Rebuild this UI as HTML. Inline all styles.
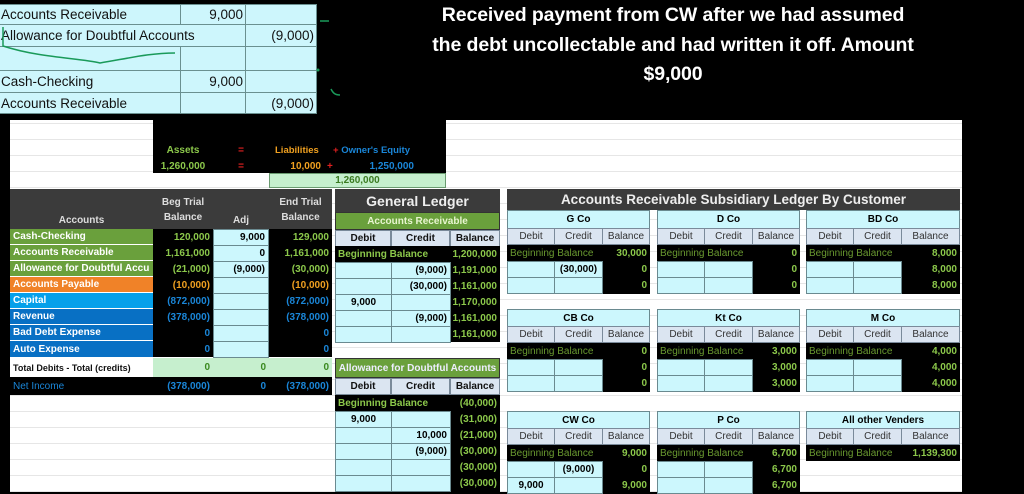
<!DOCTYPE html>
<html><head><meta charset="utf-8"><style>
*{margin:0;padding:0}
body{width:1024px;height:492px;background:#000;position:relative;overflow:hidden;font-family:"Liberation Sans",Arial,sans-serif}
.c{position:absolute;box-sizing:border-box;display:flex;align-items:center;font-size:10px;white-space:nowrap;overflow:hidden;padding:0 3px}
.r{justify-content:flex-end}.m{justify-content:center}
.b{font-weight:bold}
.k{background:#000}
.cy{background:#ccf7fd;border:1px solid #6a8a90}
.hd{background:#dbe5f1;border:1px solid #7a8a9a;color:#333;justify-content:center}
.g{color:#8cc84b}.o{color:#f0a020}.bl{color:#1a86d8}
.t{position:absolute;box-sizing:border-box;background:#cdf6fc;border:1px solid #6a9090;font-size:13.5px;color:#111;display:flex;align-items:center;padding:0 2px;white-space:nowrap}
</style></head><body>
<!-- top journal -->
<div class="t" style="left:-2px;top:4px;width:183px;height:21px">Accounts Receivable</div>
<div class="t" style="left:180px;top:4px;width:66px;height:21px;justify-content:flex-end">9,000</div>
<div class="t" style="left:245px;top:4px;width:72px;height:21px"></div>
<div class="t" style="left:-2px;top:24px;width:248px;height:23px">Allowance for Doubtful Accounts</div>
<div class="t" style="left:245px;top:24px;width:72px;height:23px;justify-content:flex-end">(9,000)</div>
<div class="t" style="left:-2px;top:46px;width:183px;height:25px"></div>
<div class="t" style="left:180px;top:46px;width:66px;height:25px"></div>
<div class="t" style="left:245px;top:46px;width:72px;height:25px"></div>
<div class="t" style="left:-2px;top:70px;width:183px;height:23px">Cash-Checking</div>
<div class="t" style="left:180px;top:70px;width:66px;height:23px;justify-content:flex-end">9,000</div>
<div class="t" style="left:245px;top:70px;width:72px;height:23px"></div>
<div class="t" style="left:-2px;top:92px;width:183px;height:22px">Accounts Receivable</div>
<div class="t" style="left:180px;top:92px;width:66px;height:22px"></div>
<div class="t" style="left:245px;top:92px;width:72px;height:22px;justify-content:flex-end">(9,000)</div>
<svg style="position:absolute;left:0;top:0" width="340" height="120"><path d="M3 27 L3 46 C40 58 80 58 100 63 C130 58 150 53 175 53" stroke="#1a9a5a" stroke-width="1.5" fill="none"/><path d="M320 21 L329 21" stroke="#1a9a5a" stroke-width="1.5"/><circle cx="318" cy="70" r="1.5" fill="#1a9a5a"/><path d="M331 89 C333 93 335 95 340 95" stroke="#1a9a5a" stroke-width="1.5" fill="none"/></svg>
<div style="position:absolute;left:393px;top:1px;width:560px;text-align:center;color:#fff;font-weight:bold;font-size:19.5px;letter-spacing:-0.1px;line-height:29.5px">Received payment from CW after we had assumed<br>the debt uncollectable and had written it off. Amount<br>$9,000</div>
<!-- sheet -->
<div style="position:absolute;left:10px;top:120px;width:952px;height:372px;background:#fff;background-image:repeating-linear-gradient(0deg,#e6e6e6 0 1px,transparent 1px 16px)"></div>
<div class="c k" style="left:153px;top:120px;width:293px;height:53px"></div>
<div class="c b g m" style="left:153px;top:143px;width:60px;height:14px">Assets</div>
<div class="c b m" style="left:213px;top:143px;width:56px;height:14px;color:#e02020">=</div>
<div class="c b o" style="left:272px;top:143px;width:60px;height:14px;font-size:9.5px">Liabilities</div>
<div class="c b bl" style="left:330px;top:143px;width:116px;height:14px;font-size:9.5px"><span style="color:#e02020">+</span>&nbsp;Owner's Equity</div>
<div class="c b g m" style="left:153px;top:159px;width:60px;height:14px">1,260,000</div>
<div class="c b m" style="left:213px;top:159px;width:56px;height:14px;color:#e02020">=</div>
<div class="c b o r" style="left:269px;top:159px;width:55px;height:14px">10,000</div>
<div class="c b" style="left:324px;top:159px;width:20px;height:14px;color:#e02020">+</div>
<div class="c b bl r" style="left:340px;top:159px;width:77px;height:14px">1,250,000</div>
<div class="c b m" style="left:269px;top:173px;width:177px;height:15px;background:#c6efce;border:1px solid #6a9a70;color:#3a7a20">1,260,000</div>
<!-- trial balance -->
<div class="c" style="left:10px;top:189px;width:322px;height:40px;background:#3b3b3b"></div>
<div class="c b m" style="left:10px;top:212px;width:143px;height:16px;color:#ddd">Accounts</div>
<div class="c b m" style="left:153px;top:194px;width:60px;height:32px;color:#ddd;text-align:center;line-height:15px;white-space:normal">Beg Trial Balance</div>
<div class="c b m" style="left:213px;top:212px;width:56px;height:16px;color:#ddd">Adj</div>
<div class="c b m" style="left:269px;top:194px;width:63px;height:32px;color:#ddd;text-align:center;line-height:15px;white-space:normal">End Trial Balance</div>

<div class="c b" style="left:10px;top:229px;width:143px;height:16px;background:#6aa03c;color:#fff;border-bottom:1px solid #fff">Cash-Checking</div>
<div class="c b" style="left:10px;top:245px;width:143px;height:16px;background:#6aa03c;color:#fff;border-bottom:1px solid #fff">Accounts Receivable</div>
<div class="c b" style="left:10px;top:261px;width:143px;height:16px;background:#6aa03c;color:#fff;border-bottom:1px solid #fff">Allowance for Doubtful Accu</div>
<div class="c b" style="left:10px;top:277px;width:143px;height:16px;background:#f08228;color:#fff;border-bottom:1px solid #fff">Accounts Payable</div>
<div class="c b" style="left:10px;top:293px;width:143px;height:16px;background:#05a0ea;color:#fff;border-bottom:1px solid #fff">Capital</div>
<div class="c b" style="left:10px;top:309px;width:143px;height:16px;background:#0870c4;color:#fff;border-bottom:1px solid #fff">Revenue</div>
<div class="c b" style="left:10px;top:325px;width:143px;height:16px;background:#0870c4;color:#fff;border-bottom:1px solid #fff">Bad Debt Expense</div>
<div class="c b" style="left:10px;top:341px;width:143px;height:16px;background:#0870c4;color:#fff">Auto Expense</div>
<div class="c k" style="left:153px;top:229px;width:60px;height:128px"></div>
<div class="c k" style="left:269px;top:229px;width:63px;height:128px"></div>
<div class="c b g r" style="left:153px;top:229px;width:60px;height:16px">120,000</div>
<div class="c b g r" style="left:153px;top:245px;width:60px;height:16px">1,161,000</div>
<div class="c b g r" style="left:153px;top:261px;width:60px;height:16px">(21,000)</div>
<div class="c b o r" style="left:153px;top:277px;width:60px;height:16px">(10,000)</div>
<div class="c b bl r" style="left:153px;top:293px;width:60px;height:16px">(872,000)</div>
<div class="c b bl r" style="left:153px;top:309px;width:60px;height:16px">(378,000)</div>
<div class="c b bl r" style="left:153px;top:325px;width:60px;height:16px">0</div>
<div class="c b bl r" style="left:153px;top:341px;width:60px;height:16px">0</div>
<div class="c b cy r" style="left:213px;top:229px;width:56px;height:17px">9,000</div>
<div class="c b cy r" style="left:213px;top:245px;width:56px;height:17px">0</div>
<div class="c b cy r" style="left:213px;top:261px;width:56px;height:17px">(9,000)</div>
<div class="c b cy" style="left:213px;top:277px;width:56px;height:17px"></div>
<div class="c b cy" style="left:213px;top:293px;width:56px;height:17px"></div>
<div class="c b cy" style="left:213px;top:309px;width:56px;height:17px"></div>
<div class="c b cy" style="left:213px;top:325px;width:56px;height:17px"></div>
<div class="c b cy" style="left:213px;top:341px;width:56px;height:17px"></div>
<div class="c b g r" style="left:269px;top:229px;width:63px;height:16px">129,000</div>
<div class="c b g r" style="left:269px;top:245px;width:63px;height:16px">1,161,000</div>
<div class="c b g r" style="left:269px;top:261px;width:63px;height:16px">(30,000)</div>
<div class="c b o r" style="left:269px;top:277px;width:63px;height:16px">(10,000)</div>
<div class="c b bl r" style="left:269px;top:293px;width:63px;height:16px">(872,000)</div>
<div class="c b bl r" style="left:269px;top:309px;width:63px;height:16px">(378,000)</div>
<div class="c b bl r" style="left:269px;top:325px;width:63px;height:16px">0</div>
<div class="c b bl r" style="left:269px;top:341px;width:63px;height:16px">0</div>
<div class="c b" style="left:10px;top:358px;width:143px;height:19px;background:#fff;font-size:9px;color:#111">Total Debits - Total (credits)</div>
<div class="c" style="left:153px;top:358px;width:179px;height:19px;background:#c6efce"></div>
<div class="c b r" style="left:153px;top:358px;width:60px;height:19px;color:#3a8a20">0</div>
<div class="c b r" style="left:213px;top:358px;width:56px;height:19px;color:#3a8a20">0</div>
<div class="c b r" style="left:269px;top:358px;width:63px;height:19px;color:#3a8a20">0</div>
<div class="c k" style="left:10px;top:377px;width:322px;height:18px"></div>
<div class="c bl" style="left:10px;top:377px;width:143px;height:18px">Net Income</div>
<div class="c b bl r" style="left:153px;top:377px;width:60px;height:18px">(378,000)</div>
<div class="c b bl r" style="left:213px;top:377px;width:56px;height:18px">0</div>
<div class="c b bl r" style="left:269px;top:377px;width:63px;height:18px">(378,000)</div>
<!-- general ledger -->
<div class="c b m" style="left:335px;top:189px;width:165px;height:23px;background:#3b3b3b;color:#eee;font-size:14px">General Ledger</div>
<div class="c b m" style="left:335px;top:212px;width:165px;height:18px;background:#6aa03c;color:#e8f5d0;border:1px solid #333">Accounts Receivable</div>
<div class="c b hd" style="left:335px;top:230px;width:56px;height:17px;color:#111">Debit</div>
<div class="c b hd" style="left:391px;top:230px;width:59px;height:17px;color:#111">Credit</div>
<div class="c b hd" style="left:450px;top:230px;width:50px;height:17px;color:#111">Balance</div>
<div class="c k" style="left:335px;top:246px;width:165px;height:96px"></div>
<div class="c b g" style="left:335px;top:246px;width:120px;height:16px">Beginning Balance</div>
<div class="c b g r" style="left:450px;top:246px;width:50px;height:16px">1,200,000</div>
<div class="c b cy" style="left:335px;top:262px;width:57px;height:17px"></div><div class="c b cy r" style="left:391px;top:262px;width:60px;height:17px">(9,000)</div><div class="c b g r" style="left:450px;top:262px;width:50px;height:16px">1,191,000</div>
<div class="c b cy" style="left:335px;top:278px;width:57px;height:17px"></div><div class="c b cy r" style="left:391px;top:278px;width:60px;height:17px">(30,000)</div><div class="c b g r" style="left:450px;top:278px;width:50px;height:16px">1,161,000</div>
<div class="c b cy m" style="left:335px;top:294px;width:57px;height:17px">9,000</div><div class="c b cy" style="left:391px;top:294px;width:60px;height:17px"></div><div class="c b g r" style="left:450px;top:294px;width:50px;height:16px">1,170,000</div>
<div class="c b cy" style="left:335px;top:310px;width:57px;height:17px"></div><div class="c b cy r" style="left:391px;top:310px;width:60px;height:17px">(9,000)</div><div class="c b g r" style="left:450px;top:310px;width:50px;height:16px">1,161,000</div>
<div class="c b cy" style="left:335px;top:326px;width:57px;height:17px"></div><div class="c b cy" style="left:391px;top:326px;width:60px;height:17px"></div><div class="c b g r" style="left:450px;top:326px;width:50px;height:16px">1,161,000</div>

<div class="c b m" style="left:335px;top:358px;width:165px;height:20px;background:#6aa03c;color:#eef;border:1px solid #333">Allowance for Doubtful Accounts</div>
<div class="c b hd" style="left:335px;top:378px;width:56px;height:17px;color:#111">Debit</div>
<div class="c b hd" style="left:391px;top:378px;width:59px;height:17px;color:#111">Credit</div>
<div class="c b hd" style="left:450px;top:378px;width:50px;height:17px;color:#111">Balance</div>
<div class="c k" style="left:335px;top:395px;width:165px;height:97px"></div>
<div class="c b g" style="left:335px;top:395px;width:120px;height:16px">Beginning Balance</div>
<div class="c b g r" style="left:450px;top:395px;width:50px;height:16px">(40,000)</div>
<div class="c b cy m" style="left:335px;top:411px;width:57px;height:17px">9,000</div><div class="c b cy" style="left:391px;top:411px;width:60px;height:17px"></div><div class="c b g r" style="left:450px;top:411px;width:50px;height:16px">(31,000)</div>
<div class="c b cy" style="left:335px;top:427px;width:57px;height:17px"></div><div class="c b cy r" style="left:391px;top:427px;width:60px;height:17px">10,000</div><div class="c b g r" style="left:450px;top:427px;width:50px;height:16px">(21,000)</div>
<div class="c b cy" style="left:335px;top:443px;width:57px;height:17px"></div><div class="c b cy r" style="left:391px;top:443px;width:60px;height:17px">(9,000)</div><div class="c b g r" style="left:450px;top:443px;width:50px;height:16px">(30,000)</div>
<div class="c b cy" style="left:335px;top:459px;width:57px;height:17px"></div><div class="c b cy" style="left:391px;top:459px;width:60px;height:17px"></div><div class="c b g r" style="left:450px;top:459px;width:50px;height:16px">(30,000)</div>
<div class="c b cy" style="left:335px;top:475px;width:57px;height:17px"></div><div class="c b cy" style="left:391px;top:475px;width:60px;height:17px"></div><div class="c b g r" style="left:450px;top:475px;width:50px;height:16px">(30,000)</div>
<!-- subsidiary -->
<div class="c b m" style="left:507px;top:189px;width:453px;height:21px;background:#3b3b3b;color:#eee;font-size:13.5px">Accounts Receivable Subsidiary Ledger By Customer</div>

<!-- G Co -->
<div class="c b m cy" style="left:507px;top:210px;width:143px;height:19px">G Co</div>
<div class="c hd" style="left:507px;top:228px;width:48px;height:17px">Debit</div><div class="c hd" style="left:554px;top:228px;width:49px;height:17px">Credit</div><div class="c hd" style="left:602px;top:228px;width:48px;height:17px">Balance</div>
<div class="c k" style="left:507px;top:245px;width:143px;height:49px"></div>
<div class="c g" style="left:507px;top:245px;width:100px;height:16px;color:#6a9a30">Beginning Balance</div><div class="c b g r" style="left:602px;top:245px;width:48px;height:16px">30,000</div>
<div class="c cy" style="left:507px;top:261px;width:48px;height:17px"></div><div class="c b cy m" style="left:554px;top:261px;width:49px;height:17px">(30,000)</div><div class="c b g r" style="left:602px;top:261px;width:48px;height:16px">0</div>
<div class="c cy" style="left:507px;top:277px;width:48px;height:17px"></div><div class="c cy" style="left:554px;top:277px;width:49px;height:17px"></div><div class="c b g r" style="left:602px;top:277px;width:48px;height:16px">0</div>
<!-- D Co -->
<div class="c b m cy" style="left:657px;top:210px;width:143px;height:19px">D Co</div>
<div class="c hd" style="left:657px;top:228px;width:48px;height:17px">Debit</div><div class="c hd" style="left:704px;top:228px;width:49px;height:17px">Credit</div><div class="c hd" style="left:752px;top:228px;width:48px;height:17px">Balance</div>
<div class="c k" style="left:657px;top:245px;width:143px;height:49px"></div>
<div class="c g" style="left:657px;top:245px;width:100px;height:16px;color:#6a9a30">Beginning Balance</div><div class="c b g r" style="left:752px;top:245px;width:48px;height:16px">0</div>
<div class="c cy" style="left:657px;top:261px;width:48px;height:17px"></div><div class="c cy" style="left:704px;top:261px;width:49px;height:17px"></div><div class="c b g r" style="left:752px;top:261px;width:48px;height:16px">0</div>
<div class="c cy" style="left:657px;top:277px;width:48px;height:17px"></div><div class="c cy" style="left:704px;top:277px;width:49px;height:17px"></div><div class="c b g r" style="left:752px;top:277px;width:48px;height:16px">0</div>
<!-- BD Co -->
<div class="c b m cy" style="left:806px;top:210px;width:154px;height:19px">BD Co</div>
<div class="c hd" style="left:806px;top:228px;width:48px;height:17px">Debit</div><div class="c hd" style="left:853px;top:228px;width:49px;height:17px">Credit</div><div class="c hd" style="left:901px;top:228px;width:59px;height:17px">Balance</div>
<div class="c k" style="left:806px;top:245px;width:154px;height:49px"></div>
<div class="c g" style="left:806px;top:245px;width:100px;height:16px;color:#6a9a30">Beginning Balance</div><div class="c b g r" style="left:901px;top:245px;width:59px;height:16px">8,000</div>
<div class="c cy" style="left:806px;top:261px;width:48px;height:17px"></div><div class="c cy" style="left:853px;top:261px;width:49px;height:17px"></div><div class="c b g r" style="left:901px;top:261px;width:59px;height:16px">8,000</div>
<div class="c cy" style="left:806px;top:277px;width:48px;height:17px"></div><div class="c cy" style="left:853px;top:277px;width:49px;height:17px"></div><div class="c b g r" style="left:901px;top:277px;width:59px;height:16px">8,000</div>

<!-- CB Co -->
<div class="c b m cy" style="left:507px;top:309px;width:143px;height:18px">CB Co</div>
<div class="c hd" style="left:507px;top:326px;width:48px;height:17px">Debit</div><div class="c hd" style="left:554px;top:326px;width:49px;height:17px">Credit</div><div class="c hd" style="left:602px;top:326px;width:48px;height:17px">Balance</div>
<div class="c k" style="left:507px;top:343px;width:143px;height:49px"></div>
<div class="c g" style="left:507px;top:343px;width:100px;height:16px;color:#6a9a30">Beginning Balance</div><div class="c b g r" style="left:602px;top:343px;width:48px;height:16px">0</div>
<div class="c cy" style="left:507px;top:359px;width:48px;height:17px"></div><div class="c cy" style="left:554px;top:359px;width:49px;height:17px"></div><div class="c b g r" style="left:602px;top:359px;width:48px;height:16px">0</div>
<div class="c cy" style="left:507px;top:375px;width:48px;height:17px"></div><div class="c cy" style="left:554px;top:375px;width:49px;height:17px"></div><div class="c b g r" style="left:602px;top:375px;width:48px;height:16px">0</div>
<!-- Kt Co -->
<div class="c b m cy" style="left:657px;top:309px;width:143px;height:18px">Kt Co</div>
<div class="c hd" style="left:657px;top:326px;width:48px;height:17px">Debit</div><div class="c hd" style="left:704px;top:326px;width:49px;height:17px">Credit</div><div class="c hd" style="left:752px;top:326px;width:48px;height:17px">Balance</div>
<div class="c k" style="left:657px;top:343px;width:143px;height:49px"></div>
<div class="c g" style="left:657px;top:343px;width:100px;height:16px;color:#6a9a30">Beginning Balance</div><div class="c b g r" style="left:752px;top:343px;width:48px;height:16px">3,000</div>
<div class="c cy" style="left:657px;top:359px;width:48px;height:17px"></div><div class="c cy" style="left:704px;top:359px;width:49px;height:17px"></div><div class="c b g r" style="left:752px;top:359px;width:48px;height:16px">3,000</div>
<div class="c cy" style="left:657px;top:375px;width:48px;height:17px"></div><div class="c cy" style="left:704px;top:375px;width:49px;height:17px"></div><div class="c b g r" style="left:752px;top:375px;width:48px;height:16px">3,000</div>
<!-- M Co -->
<div class="c b m cy" style="left:806px;top:309px;width:154px;height:18px">M Co</div>
<div class="c hd" style="left:806px;top:326px;width:48px;height:17px">Debit</div><div class="c hd" style="left:853px;top:326px;width:49px;height:17px">Credit</div><div class="c hd" style="left:901px;top:326px;width:59px;height:17px">Balance</div>
<div class="c k" style="left:806px;top:343px;width:154px;height:49px"></div>
<div class="c g" style="left:806px;top:343px;width:100px;height:16px;color:#6a9a30">Beginning Balance</div><div class="c b g r" style="left:901px;top:343px;width:59px;height:16px">4,000</div>
<div class="c cy" style="left:806px;top:359px;width:48px;height:17px"></div><div class="c cy" style="left:853px;top:359px;width:49px;height:17px"></div><div class="c b g r" style="left:901px;top:359px;width:59px;height:16px">4,000</div>
<div class="c cy" style="left:806px;top:375px;width:48px;height:17px"></div><div class="c cy" style="left:853px;top:375px;width:49px;height:17px"></div><div class="c b g r" style="left:901px;top:375px;width:59px;height:16px">4,000</div>

<!-- CW Co -->
<div class="c b m cy" style="left:507px;top:411px;width:143px;height:18px">CW Co</div>
<div class="c hd" style="left:507px;top:428px;width:48px;height:17px">Debit</div><div class="c hd" style="left:554px;top:428px;width:49px;height:17px">Credit</div><div class="c hd" style="left:602px;top:428px;width:48px;height:17px">Balance</div>
<div class="c k" style="left:507px;top:445px;width:143px;height:47px"></div>
<div class="c g" style="left:507px;top:445px;width:100px;height:16px;color:#6a9a30">Beginning Balance</div><div class="c b g r" style="left:602px;top:445px;width:48px;height:16px">9,000</div>
<div class="c cy" style="left:507px;top:461px;width:48px;height:17px"></div><div class="c b cy m" style="left:554px;top:461px;width:49px;height:17px">(9,000)</div><div class="c b g r" style="left:602px;top:461px;width:48px;height:16px">0</div>
<div class="c b cy m" style="left:507px;top:477px;width:48px;height:17px">9,000</div><div class="c cy" style="left:554px;top:477px;width:49px;height:17px"></div><div class="c b g r" style="left:602px;top:477px;width:48px;height:16px">9,000</div>
<!-- P Co -->
<div class="c b m cy" style="left:657px;top:411px;width:143px;height:18px">P Co</div>
<div class="c hd" style="left:657px;top:428px;width:48px;height:17px">Debit</div><div class="c hd" style="left:704px;top:428px;width:49px;height:17px">Credit</div><div class="c hd" style="left:752px;top:428px;width:48px;height:17px">Balance</div>
<div class="c k" style="left:657px;top:445px;width:143px;height:47px"></div>
<div class="c g" style="left:657px;top:445px;width:100px;height:16px;color:#6a9a30">Beginning Balance</div><div class="c b g r" style="left:752px;top:445px;width:48px;height:16px">6,700</div>
<div class="c cy" style="left:657px;top:461px;width:48px;height:17px"></div><div class="c cy" style="left:704px;top:461px;width:49px;height:17px"></div><div class="c b g r" style="left:752px;top:461px;width:48px;height:16px">6,700</div>
<div class="c cy" style="left:657px;top:477px;width:48px;height:17px"></div><div class="c cy" style="left:704px;top:477px;width:49px;height:17px"></div><div class="c b g r" style="left:752px;top:477px;width:48px;height:16px">6,700</div>
<!-- All other -->
<div class="c b m cy" style="left:806px;top:411px;width:154px;height:18px">All other Venders</div>
<div class="c hd" style="left:806px;top:428px;width:48px;height:17px">Debit</div><div class="c hd" style="left:853px;top:428px;width:49px;height:17px">Credit</div><div class="c hd" style="left:901px;top:428px;width:59px;height:17px">Balance</div>
<div class="c k" style="left:806px;top:445px;width:154px;height:16px"></div>
<div class="c g" style="left:806px;top:445px;width:100px;height:16px;color:#6a9a30">Beginning Balance</div><div class="c b g r" style="left:896px;top:445px;width:64px;height:16px">1,139,300</div>
</body></html>
